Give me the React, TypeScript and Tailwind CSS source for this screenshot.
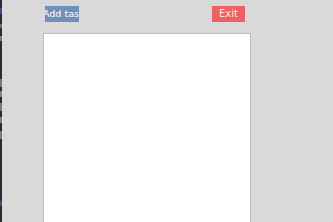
export default function App() {
  return (
    <div className="flex h-[222px] w-[333px] overflow-hidden bg-[#d9d9d9] font-['DejaVu_Sans',sans-serif]">
      {/* window edge strip */}
      <div className="flex w-[2px] flex-col bg-[#2b2b2b]">
        <div className="mt-[8px] h-[6px] bg-[#3b4f8a]" />
        <div className="mt-[10px] h-[4px] bg-[#4d7a86]" />
        <div className="mt-[8px] h-[5px] bg-[#7d7f6a]" />
        <div className="mt-[38px] h-[8px] bg-[#7b7d68]" />
        <div className="mt-[4px] h-[6px] bg-[#85877a]" />
        <div className="mt-[6px] h-[8px] bg-[#7b7d68]" />
        <div className="mt-[6px] h-[6px] bg-[#85877a]" />
        <div className="mt-[8px] h-[8px] bg-[#7b7d68]" />
        <div className="mt-[62px] h-[5px] bg-[#3b4f8a]" />
      </div>

      <div className="flex flex-col pl-[41px]">
        <div className="flex h-[33px] w-[208px] items-start pt-[6px]">
          <button className="ml-[2px] flex h-[16px] w-[34px] items-center overflow-hidden whitespace-nowrap bg-[#6f8fbd] text-[9.5px] leading-none text-white">
            <span className="-ml-[2px]">Add task</span>
          </button>
          <button className="ml-auto mr-[6px] flex h-[16px] w-[33px] items-center justify-center bg-[#ec6262] text-[10px] leading-none text-[#fbe4e4]">
            Exit
          </button>
        </div>
        <div className="h-[189px] w-[208px] border border-[#bdbdbd] border-b-0 bg-white" />
      </div>
    </div>
  );
}
